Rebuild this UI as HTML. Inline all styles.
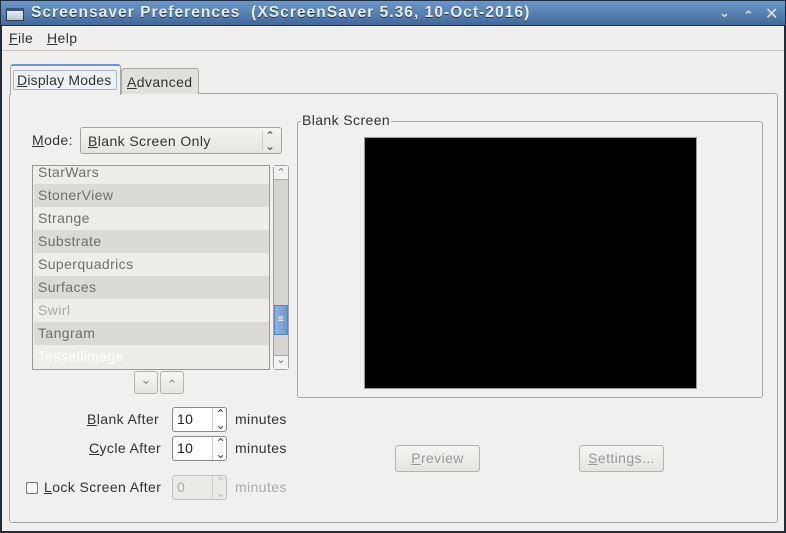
<!DOCTYPE html>
<html><head><meta charset="utf-8"><style>
*{box-sizing:border-box;margin:0;padding:0}
body{width:786px;height:533px;overflow:hidden;background:#1e2c3c;font-family:"Liberation Sans","DejaVu Sans",sans-serif;font-size:14px;letter-spacing:0.4px;color:#3c3c3c;position:relative}
.a{position:absolute}
u{text-decoration:underline}
.title{left:0;top:0;width:786px;height:26px;background:linear-gradient(#6a98c8,#44699a);border:1px solid #1e3047}
.win{left:2px;top:26px;width:782px;height:505px;background:#f0efed}
.row{position:absolute;left:1px;width:235px;height:23px;padding-left:4px;line-height:23px;color:#6e6e6e}
.btn{border:1px solid #b5b3af;border-radius:3px;background:linear-gradient(#f6f5f3,#e6e4e0)}
.spin{background:#fff;border:1px solid #8e8c88;border-radius:3px;height:25px}
.ar{position:absolute;left:41px;width:13px;font-size:12px;line-height:11px;text-align:center;color:#444;letter-spacing:0}
</style></head><body>
<div class="a title">
 <div class="a" style="left:5px;top:7px;width:18px;height:13px;background:linear-gradient(#e8edf3,#b8c3d0);border:1px solid #2a3c52;border-top:3px solid #3b5577"></div>
 <div class="a" style="left:30px;top:3px;font-weight:bold;font-size:15.5px;letter-spacing:1.05px;color:#e6edf5;text-shadow:0 1px #23364d;white-space:pre">Screensaver Preferences  (XScreenSaver 5.36, 10-Oct-2016)</div>
 <div class="a" style="left:718px;top:4px;color:#dfe6ee;font-size:13px;font-weight:bold">&#8964;</div>
 <div class="a" style="left:742px;top:7px;color:#dfe6ee;font-size:13px;font-weight:bold">&#8963;</div>
 <div class="a" style="left:764px;top:3px;color:#dfe6ee;font-size:16px;font-weight:bold">✕</div>
</div>
<div class="a win">
 <div class="a" style="left:0;top:24px;width:782px;height:1px;background:#c9c7c3"></div>
 <div class="a" style="left:7px;top:4px;color:#333"><u>F</u>ile</div>
 <div class="a" style="left:45px;top:4px;color:#333"><u>H</u>elp</div>
 <div class="a" style="left:7px;top:67px;width:769px;height:430px;border:1px solid #aaa8a4;border-radius:3px;background:#f1f0ee"></div>
 <div class="a" style="left:119px;top:42px;width:78px;height:26px;border:1px solid #aaa8a4;border-bottom:none;border-radius:3px 3px 0 0;background:#e2e0dc;padding:5px 0 0 5px;color:#333"><u>A</u>dvanced</div>
 <div class="a" style="left:8px;top:38px;width:111px;height:31px;border:1px solid #aaa8a4;border-top:2px solid #6d97c9;border-bottom:none;border-radius:3px 3px 0 0;background:#f1f0ee"></div>
 <div class="a" style="left:11px;top:44px;width:104px;height:20px;border:1px solid #9fb5d3;border-radius:2px;background:#eef1f5;padding:0 0 0 3px;line-height:18px;color:#333;letter-spacing:0.2px"><u>D</u>isplay Modes</div>
 <div class="a" style="left:30px;top:106px;color:#333"><u>M</u>ode:</div>
 <div class="a btn" style="left:78px;top:101px;width:202px;height:27px;border-color:#a5a39f"><div class="a" style="left:7px;top:5px;color:#333"><u>B</u>lank Screen Only</div><div class="a" style="left:181px;top:3px;height:19px;width:1px;background:#ccc"></div><div class="a" style="left:184px;top:3px;font-size:12px;line-height:10px;color:#444;letter-spacing:0">&#8963;<br>&#8964;</div></div>
 <div class="a" style="left:30px;top:139px;width:238px;height:205px;border:1px solid #9a9894;background:#eeede9;overflow:hidden">
  <div class="row" style="top:-5px">StarWars</div>
  <div class="row" style="top:18px;background:#dcdad6">StonerView</div>
  <div class="row" style="top:41px">Strange</div>
  <div class="row" style="top:64px;background:#dcdad6">Substrate</div>
  <div class="row" style="top:87px">Superquadrics</div>
  <div class="row" style="top:110px;background:#dcdad6">Surfaces</div>
  <div class="row" style="top:133px;color:#aaa">Swirl</div>
  <div class="row" style="top:156px;background:#dcdad6">Tangram</div>
  <div class="row" style="top:179px;color:#fff">Tessellimage</div>
 </div>
 <div class="a" style="left:271px;top:139px;width:16px;height:205px;border:1px solid #a5a39f;border-radius:3px;background:#d6d4d0"></div>
 <div class="a" style="left:272px;top:140px;width:14px;height:14px;background:#f3f2f0;border-bottom:1px solid #aaa;font-size:11px;text-align:center;color:#777;letter-spacing:0">&#8963;</div>
 <div class="a" style="left:272px;top:329px;width:14px;height:14px;background:#f3f2f0;border-top:1px solid #aaa;font-size:11px;text-align:center;color:#777;line-height:8px;letter-spacing:0">&#8964;</div>
 <div class="a" style="left:272px;top:279px;width:14px;height:30px;background:linear-gradient(90deg,#8fb4e0,#6c9ad2);border:1px solid #5a86bd;color:#fff;font-size:10px;text-align:center;line-height:28px">≡</div>
 <div class="a btn" style="left:132px;top:345px;width:24px;height:23px;font-size:13px;color:#888;text-align:center;line-height:16px;letter-spacing:0">&#8964;</div>
 <div class="a btn" style="left:158px;top:345px;width:24px;height:23px;font-size:13px;color:#888;text-align:center;line-height:26px;letter-spacing:0">&#8963;</div>
 <div class="a" style="left:85px;top:385px;color:#333"><u>B</u>lank After</div>
 <div class="a spin" style="left:170px;top:381px;width:55px"><div class="a" style="left:4px;top:3px;color:#222">10</div><div class="a" style="left:39px;top:0;width:1px;height:23px;background:#ccc"></div><div class="ar" style="top:1px">&#8963;<br>&#8964;</div></div>
 <div class="a" style="left:87px;top:414px;color:#333"><u>C</u>ycle After</div>
 <div class="a spin" style="left:170px;top:410px;width:55px"><div class="a" style="left:4px;top:3px;color:#222">10</div><div class="a" style="left:39px;top:0;width:1px;height:23px;background:#ccc"></div><div class="ar" style="top:1px">&#8963;<br>&#8964;</div></div>
 <div class="a" style="left:233px;top:385px;color:#333">minutes</div>
 <div class="a" style="left:233px;top:414px;color:#333">minutes</div>
 <div class="a" style="left:24px;top:456px;width:12px;height:12px;border:1px solid #777;border-radius:2px;background:#fff"></div>
 <div class="a" style="left:42px;top:453px;color:#333"><u>L</u>ock Screen After</div>
 <div class="a spin" style="left:170px;top:449px;width:55px;background:#ebeae7;border-color:#c2c0bc"><div class="a" style="left:4px;top:3px;color:#aaa">0</div><div class="a" style="left:39px;top:0;width:1px;height:23px;background:#ccc"></div><div class="ar" style="top:1px;color:#bbb">&#8963;<br>&#8964;</div></div>
 <div class="a" style="left:233px;top:453px;color:#aaa">minutes</div>
 <div class="a" style="left:295px;top:95px;width:466px;height:277px;border:1px solid #aaa8a4;border-radius:3px"></div>
 <div class="a" style="left:299px;top:86px;background:#f1f0ee;padding:0 1px;color:#333">Blank Screen</div>
 <div class="a" style="left:362px;top:111px;width:333px;height:252px;background:#000;border:1px solid #999"></div>
 <div class="a btn" style="left:393px;top:419px;width:85px;height:27px;color:#999;text-align:center;line-height:25px"><u>P</u>review</div>
 <div class="a btn" style="left:577px;top:419px;width:85px;height:27px;color:#999;text-align:center;line-height:25px"><u>S</u>ettings...</div>
</div>
</body></html>
